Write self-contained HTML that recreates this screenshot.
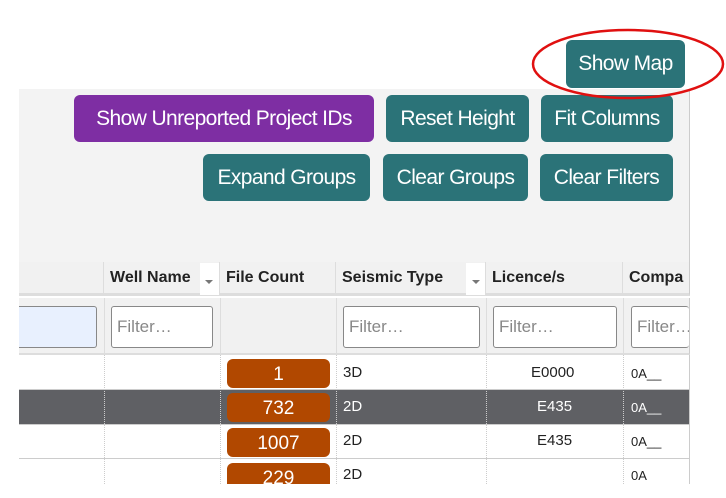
<!DOCTYPE html><html><head><style>
body{margin:0;width:726px;height:498px;background:#fff;font-family:"Liberation Sans",Arial,sans-serif;position:relative;overflow:hidden}
.a{position:absolute;box-sizing:border-box}
.btn{position:absolute;background:#2b7378;color:#fff;border-radius:6px;font-size:21px;display:flex;align-items:center;justify-content:center;letter-spacing:-0.6px}
.h{position:absolute;top:262px;height:34px;font-weight:bold;font-size:16px;line-height:32px;padding-left:6px;box-sizing:border-box;border-right:1px solid #ddd;color:#222;white-space:nowrap;overflow:hidden}
.f{position:absolute;top:306px;height:42px;border:1px solid #888;border-radius:3px;background:#fff;color:#888;font-size:17px;line-height:40px;padding-left:5px;box-sizing:border-box;overflow:hidden;white-space:nowrap}
.bd{position:absolute;left:227px;width:103px;height:29px;background:#b14800;border-radius:6px;color:#fff;font-size:19px;text-align:center;line-height:32px}
.c{position:absolute;font-size:15px;color:#222}
.vl{position:absolute;top:355px;height:129px;border-left:1px dotted #ccc}
</style></head><body>
<div class="a" style="left:19px;top:89px;width:671px;height:173px;background:#f3f3f3;border-right:1px solid #ccc"></div>
<div class="btn" style="left:566px;top:40px;width:119px;height:48px">Show Map</div>
<div class="btn" style="left:74px;top:95px;width:300px;height:47px;background:#7e2ea3">Show Unreported Project IDs</div>
<div class="btn" style="left:386px;top:95px;width:143px;height:47px">Reset Height</div>
<div class="btn" style="left:541px;top:95px;width:132px;height:47px">Fit Columns</div>
<div class="btn" style="left:203px;top:154px;width:167px;height:47px">Expand Groups</div>
<div class="btn" style="left:383px;top:154px;width:145px;height:47px">Clear Groups</div>
<div class="btn" style="left:540px;top:154px;width:133px;height:47px">Clear Filters</div>
<svg class="a" style="left:0;top:0" width="726" height="110"><ellipse cx="628" cy="64" rx="95" ry="34" fill="none" stroke="#e01010" stroke-width="2.5"/></svg>
<div class="a" style="left:19px;top:262px;width:671px;height:34px;background:#f1f1f1;border-bottom:3px solid #ddd;border-right:1px solid #ccc"></div>
<div class="h" style="left:19px;width:85px"></div>
<div class="h" style="left:104px;width:116px">Well Name</div>
<div class="a" style="left:200px;top:263px;width:19px;height:32px;background:#fff"></div>
<div class="a" style="left:205px;top:280px;border-left:4px solid transparent;border-right:4px solid transparent;border-top:4px solid #777"></div>
<div class="h" style="left:220px;width:116px">File Count</div>
<div class="h" style="left:336px;width:150px">Seismic Type</div>
<div class="a" style="left:466px;top:263px;width:19px;height:32px;background:#fff"></div>
<div class="a" style="left:472px;top:280px;border-left:4px solid transparent;border-right:4px solid transparent;border-top:4px solid #777"></div>
<div class="h" style="left:486px;width:137px">Licence/s</div>
<div class="h" style="left:623px;width:66px;border:none">Compa</div>
<div class="a" style="left:19px;top:298px;width:671px;height:57px;background:#f1f1f1;border-bottom:2px solid #ddd;border-right:1px solid #ccc"></div>
<div class="a" style="left:104px;top:298px;height:55px;border-left:1px solid #ddd"></div>
<div class="a" style="left:220px;top:298px;height:55px;border-left:1px solid #ddd"></div>
<div class="a" style="left:336px;top:298px;height:55px;border-left:1px solid #ddd"></div>
<div class="a" style="left:486px;top:298px;height:55px;border-left:1px solid #ddd"></div>
<div class="a" style="left:623px;top:298px;height:55px;border-left:1px solid #ddd"></div>
<div class="f" style="left:19px;width:78px;background:#e8f0fe;border-left:none;border-radius:0 3px 3px 0"></div>
<div class="f" style="left:111px;width:102px">Filter…</div>
<div class="f" style="left:343px;width:137px">Filter…</div>
<div class="f" style="left:493px;width:124px">Filter…</div>
<div class="f" style="left:631px;width:58px;border-right:none">Filter…</div>
<div class="a" style="left:19px;top:390px;width:671px;height:34px;background:#5f6064"></div>
<div class="a" style="left:19px;top:389px;width:671px;border-top:1px solid #ccc"></div>
<div class="a" style="left:19px;top:424px;width:671px;border-top:1px solid #ccc"></div>
<div class="a" style="left:19px;top:458px;width:671px;border-top:1px solid #ccc"></div>
<div class="a" style="left:689px;top:355px;height:129px;border-left:1px solid #ccc"></div>
<div class="vl" style="left:104px"></div><div class="vl" style="left:220px"></div><div class="vl" style="left:336px"></div><div class="vl" style="left:486px"></div><div class="vl" style="left:623px"></div>
<div class="bd" style="top:359px">1</div>
<div class="bd" style="top:393px">732</div>
<div class="bd" style="top:428px">1007</div>
<div class="bd" style="top:463px;height:21px;border-radius:6px 6px 0 0">229</div>
<div class="a" style="left:0;top:484px;width:726px;height:14px;background:#fff"></div>
<div class="c" style="left:343px;top:364px">3D</div><div class="c" style="left:343px;top:398px;color:#fff">2D</div><div class="c" style="left:343px;top:432px">2D</div><div class="c" style="left:343px;top:466px">2D</div>
<div class="c" style="left:531px;top:364px">E0000</div><div class="c" style="left:537px;top:398px;color:#fff">E435</div><div class="c" style="left:537px;top:432px">E435</div>
<div class="c" style="left:631px;top:366px;font-size:13px">0A__</div><div class="c" style="left:631px;top:400px;font-size:13px;color:#fff">0A__</div><div class="c" style="left:631px;top:434px;font-size:13px">0A__</div><div class="c" style="left:631px;top:468px;font-size:13px">0A</div>
</body></html>
